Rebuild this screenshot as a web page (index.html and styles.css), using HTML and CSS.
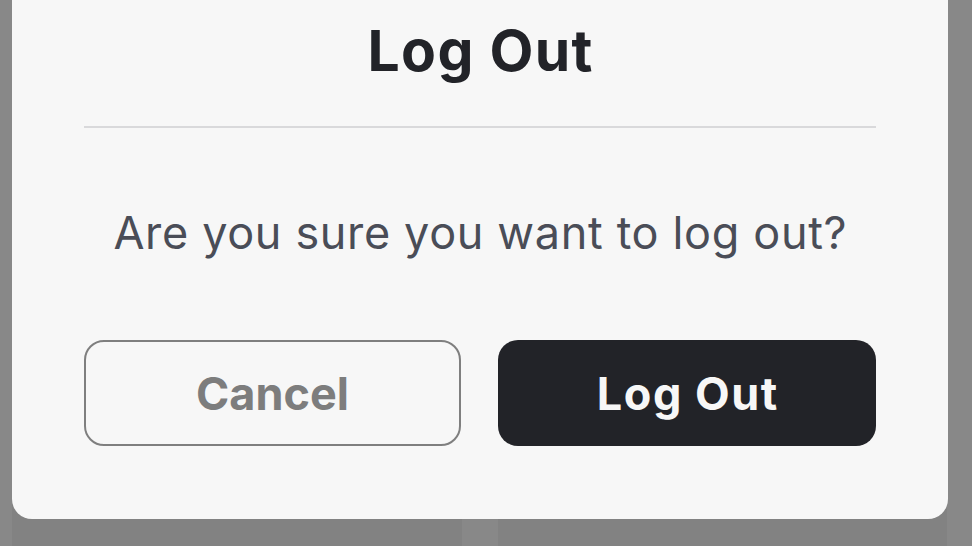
FILE: index.html
```html
<!DOCTYPE html>
<html lang="en">
<head>
<meta charset="utf-8">
<title>Log Out</title>
<link rel="stylesheet" href="styles.css">
</head>
<body>
<div class="page">
  <div class="under">
    <div class="under-block"></div>
    <div class="under-block"></div>
  </div>
</div>
<div class="modal">
  <h1 class="title">Log Out</h1>
  <div class="divider"></div>
  <p class="message">Are you sure you want to log out?</p>
  <div class="actions">
    <button class="btn btn-cancel">Cancel</button>
    <button class="btn btn-confirm">Log Out</button>
  </div>
</div>
</body>
</html>
```
FILE: styles.css
```css
* { box-sizing: border-box; }
html, body { margin: 0; padding: 0; }
body {
  width: 972px;
  height: 546px;
  overflow: hidden;
  background: #888888;
  font-family: "Inter", "Lato", "Liberation Sans", sans-serif;
  position: relative;
}
.page {
  height: 546px;
  display: flex;
  flex-direction: column;
  justify-content: flex-end;
}
.under {
  display: flex;
  gap: 36px;
  padding: 0 25px 0 12px;
  height: 200px;
}
.under-block {
  flex: 1;
  background: #828282;
}
.modal {
  position: absolute;
  left: 12px;
  top: 0;
  width: 936px;
  background: #f7f7f7;
  border-radius: 0 0 20px 20px;
  padding: 16px 72px 73px;
}
.title {
  margin: 0;
  text-align: center;
  font-size: 57px;
  line-height: 70px;
  font-weight: 700;
  letter-spacing: 1.3px;
  padding-left: 1.3px;
  color: #222328;
}
.divider {
  margin-top: 40px;
  height: 2px;
  background: #d9d9db;
}
.message {
  margin: 77px 0 0;
  text-align: center;
  font-size: 45px;
  line-height: 56px;
  font-weight: 400;
  letter-spacing: 0.65px;
  padding-left: 0.65px;
  color: #4a4d57;
}
.actions {
  margin-top: 79px;
  display: grid;
  grid-template-columns: 377px 378px;
  column-gap: 37px;
}
.btn {
  height: 106px;
  border-radius: 20px;
  font-family: inherit;
  font-size: 45px;
  font-weight: 700;
  padding: 0;
}
.btn-cancel {
  background: transparent;
  border: 2px solid #7f7f7f;
  color: #7d7d7d;
}
.btn-confirm {
  background: #222328;
  border: none;
  color: #f7f7f7;
  letter-spacing: 1.5px;
  padding-left: 1.5px;
}
```
